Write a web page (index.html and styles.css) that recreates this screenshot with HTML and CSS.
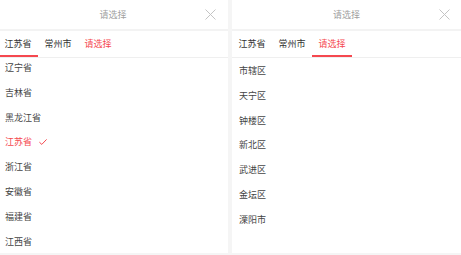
FILE: index.html
```html
<!DOCTYPE html>
<html lang="zh-CN">

<head>
    <meta charset="UTF-8">
    <meta name="viewport" content="width=device-width, initial-scale=1.0">
    <title>地区选择</title>
    <link rel="stylesheet" href="styles.css">
</head>

<body>
    <div class="page">
        <!-- 第一个面板：选择省份 -->
        <div class="picker picker-left">
            <div class="picker-header">
                <span class="picker-title">请选择</span>
                <span class="picker-close">
                    <svg width="11" height="11" viewBox="0 0 11 11">
                        <path d="M0.5 0.5 L10.5 10.5 M10.5 0.5 L0.5 10.5" stroke="#c4c4c4" stroke-width="1" fill="none" />
                    </svg>
                </span>
            </div>
            <div class="picker-tabs">
                <div class="tab tab-line">江苏省</div>
                <div class="tab">常州市</div>
                <div class="tab tab-active">请选择</div>
            </div>
            <div class="picker-body">
                <ul class="option-list scrolled">
                    <li>辽宁省</li>
                    <li>吉林省</li>
                    <li>黑龙江省</li>
                    <li class="selected">江苏省
                        <svg class="check" width="8" height="6" viewBox="0 0 8 6">
                            <path d="M0.4 3.2 L2.8 5.4 L7.6 0.4" stroke="#f5484f" stroke-width="1" fill="none" />
                        </svg>
                    </li>
                    <li>浙江省</li>
                    <li>安徽省</li>
                    <li>福建省</li>
                    <li>江西省</li>
                </ul>
            </div>
        </div>

        <!-- 第二个面板：选择区县 -->
        <div class="picker">
            <div class="picker-header">
                <span class="picker-title">请选择</span>
                <span class="picker-close picker-close-right">
                    <svg width="11" height="11" viewBox="0 0 11 11">
                        <path d="M0.5 0.5 L10.5 10.5 M10.5 0.5 L0.5 10.5" stroke="#c4c4c4" stroke-width="1" fill="none" />
                    </svg>
                </span>
            </div>
            <div class="picker-tabs">
                <div class="tab">江苏省</div>
                <div class="tab">常州市</div>
                <div class="tab tab-active tab-line">请选择</div>
            </div>
            <div class="picker-body">
                <ul class="option-list">
                    <li>市辖区</li>
                    <li>天宁区</li>
                    <li>钟楼区</li>
                    <li>新北区</li>
                    <li>武进区</li>
                    <li>金坛区</li>
                    <li>溧阳市</li>
                </ul>
            </div>
        </div>
    </div>
</body>

</html>
```

FILE: styles.css
```css
body {
    margin: 0;
    background-color: #f5f5f5;
    font-family: "Noto Sans CJK SC", "Noto Sans", sans-serif;
    font-size: 9px;
    color: #333;
}

.page {
    display: flex;
    gap: 4px;
    width: 461px;
    height: 255px;
    overflow: hidden;
}

.picker {
    flex: 1;
    height: 253px;
    background-color: white;
    display: flex;
    flex-direction: column;
}

.picker-left {
    flex: none;
    width: 230px;
    margin-left: -2px;
}

.picker-header {
    height: 29px;
    border-bottom: 2px solid #f3f3f3;
    display: flex;
    align-items: center;
    justify-content: center;
    position: relative;
}

.picker-title {
    color: #a0a0a0;
    line-height: 1;
}

.picker-close {
    position: absolute;
    right: 12px;
    top: 9px;
    width: 11px;
    height: 11px;
}

.picker-close-right {
    right: 11px;
}

.picker-tabs {
    display: flex;
    height: 26px;
    border-bottom: 1px solid #efefef;
}

.tab {
    padding: 0 6.5px;
    line-height: 26px;
    box-sizing: border-box;
    height: 26px;
    color: #333;
}

.tab-active {
    color: #f5484f;
}

.tab-line {
    border-bottom: 2px solid #f5484f;
}

.picker-body {
    flex: 1;
    overflow: hidden;
}

.option-list {
    list-style: none;
    margin: 0;
    padding: 0 7px;
}

.option-list.scrolled {
    margin-top: -3px;
}

.option-list li {
    height: 24.85px;
    display: flex;
    align-items: center;
    color: #444;
}

.option-list li.selected {
    color: #f5484f;
}

.check {
    margin-left: 7px;
}
```
